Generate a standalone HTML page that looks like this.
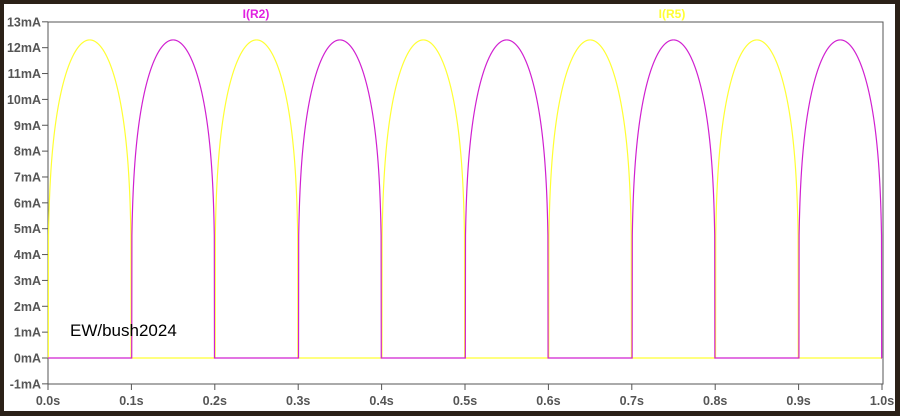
<!DOCTYPE html>
<html><head><style>
html,body{margin:0;padding:0;background:#2b2118;}
body{width:900px;height:416px;position:relative;overflow:hidden;}
#w{position:absolute;left:4px;top:4px;width:891px;height:407px;background:#fff;}
svg{position:absolute;left:0;top:0;}
</style></head><body>
<div id="w"></div>
<svg width="900" height="416" xmlns="http://www.w3.org/2000/svg" font-family="Liberation Sans, sans-serif">
<rect x="48" y="22" width="835" height="362" fill="none" stroke="#555" stroke-width="1"/>
<g id="ticks" stroke="#555" stroke-width="1"></g>
<g id="yl" font-size="12.5" font-weight="bold" fill="#555" text-anchor="end"></g>
<g id="xl" font-size="12.5" font-weight="bold" fill="#555" text-anchor="middle"></g>
<polyline id="py" fill="none" stroke="#ffff33" stroke-width="1.2"/>
<polyline id="pm" fill="none" stroke="#d020d0" stroke-width="1.2"/>
<text x="256" y="18" font-size="12" font-weight="bold" fill="#e020e0" text-anchor="middle">I(R2)</text>
<text x="672" y="18" font-size="12" font-weight="bold" fill="#ffff33" text-anchor="middle">I(R5)</text>
<text x="70" y="336" font-size="17" fill="#000">EW/bush2024</text>
</svg>
<script>
var ns="http://www.w3.org/2000/svg";
var X0=48,X1=882,Y0=358,S=25.86;
var tk=document.getElementById('ticks'),yl=document.getElementById('yl'),xl=document.getElementById('xl');
function el(p,n,a,t){var e=document.createElementNS(ns,n);for(var k in a)e.setAttribute(k,a[k]);if(t)e.textContent=t;p.appendChild(e);}
for(var i=-1;i<=13;i++){var y=Y0-i*S;el(tk,'line',{x1:42,x2:48,y1:y,y2:y});el(yl,'text',{x:41,y:y+4.5},i+'mA');}
for(var i=0;i<=10;i++){var x=X0+i*(X1-X0)/10;el(tk,'line',{x1:x,x2:x,y1:384,y2:390});el(xl,'text',{x:x,y:405},(i/10).toFixed(1)+'s');}
function pts(off){var a=[];for(var t=0;t<=1.0001;t+=0.0002){var ph=((t+off)%0.2+0.2)%0.2;var v=0;if(ph>0.0005&&ph<0.0995){v=12.3*Math.pow(Math.sin(Math.PI*ph/0.1),0.24);}a.push((X0+t*(X1-X0)).toFixed(2)+','+(Y0-v*S).toFixed(2));}return a.join(' ');}
document.getElementById('py').setAttribute('points',pts(0));
document.getElementById('pm').setAttribute('points',pts(0.1));
</script>
</body></html>
